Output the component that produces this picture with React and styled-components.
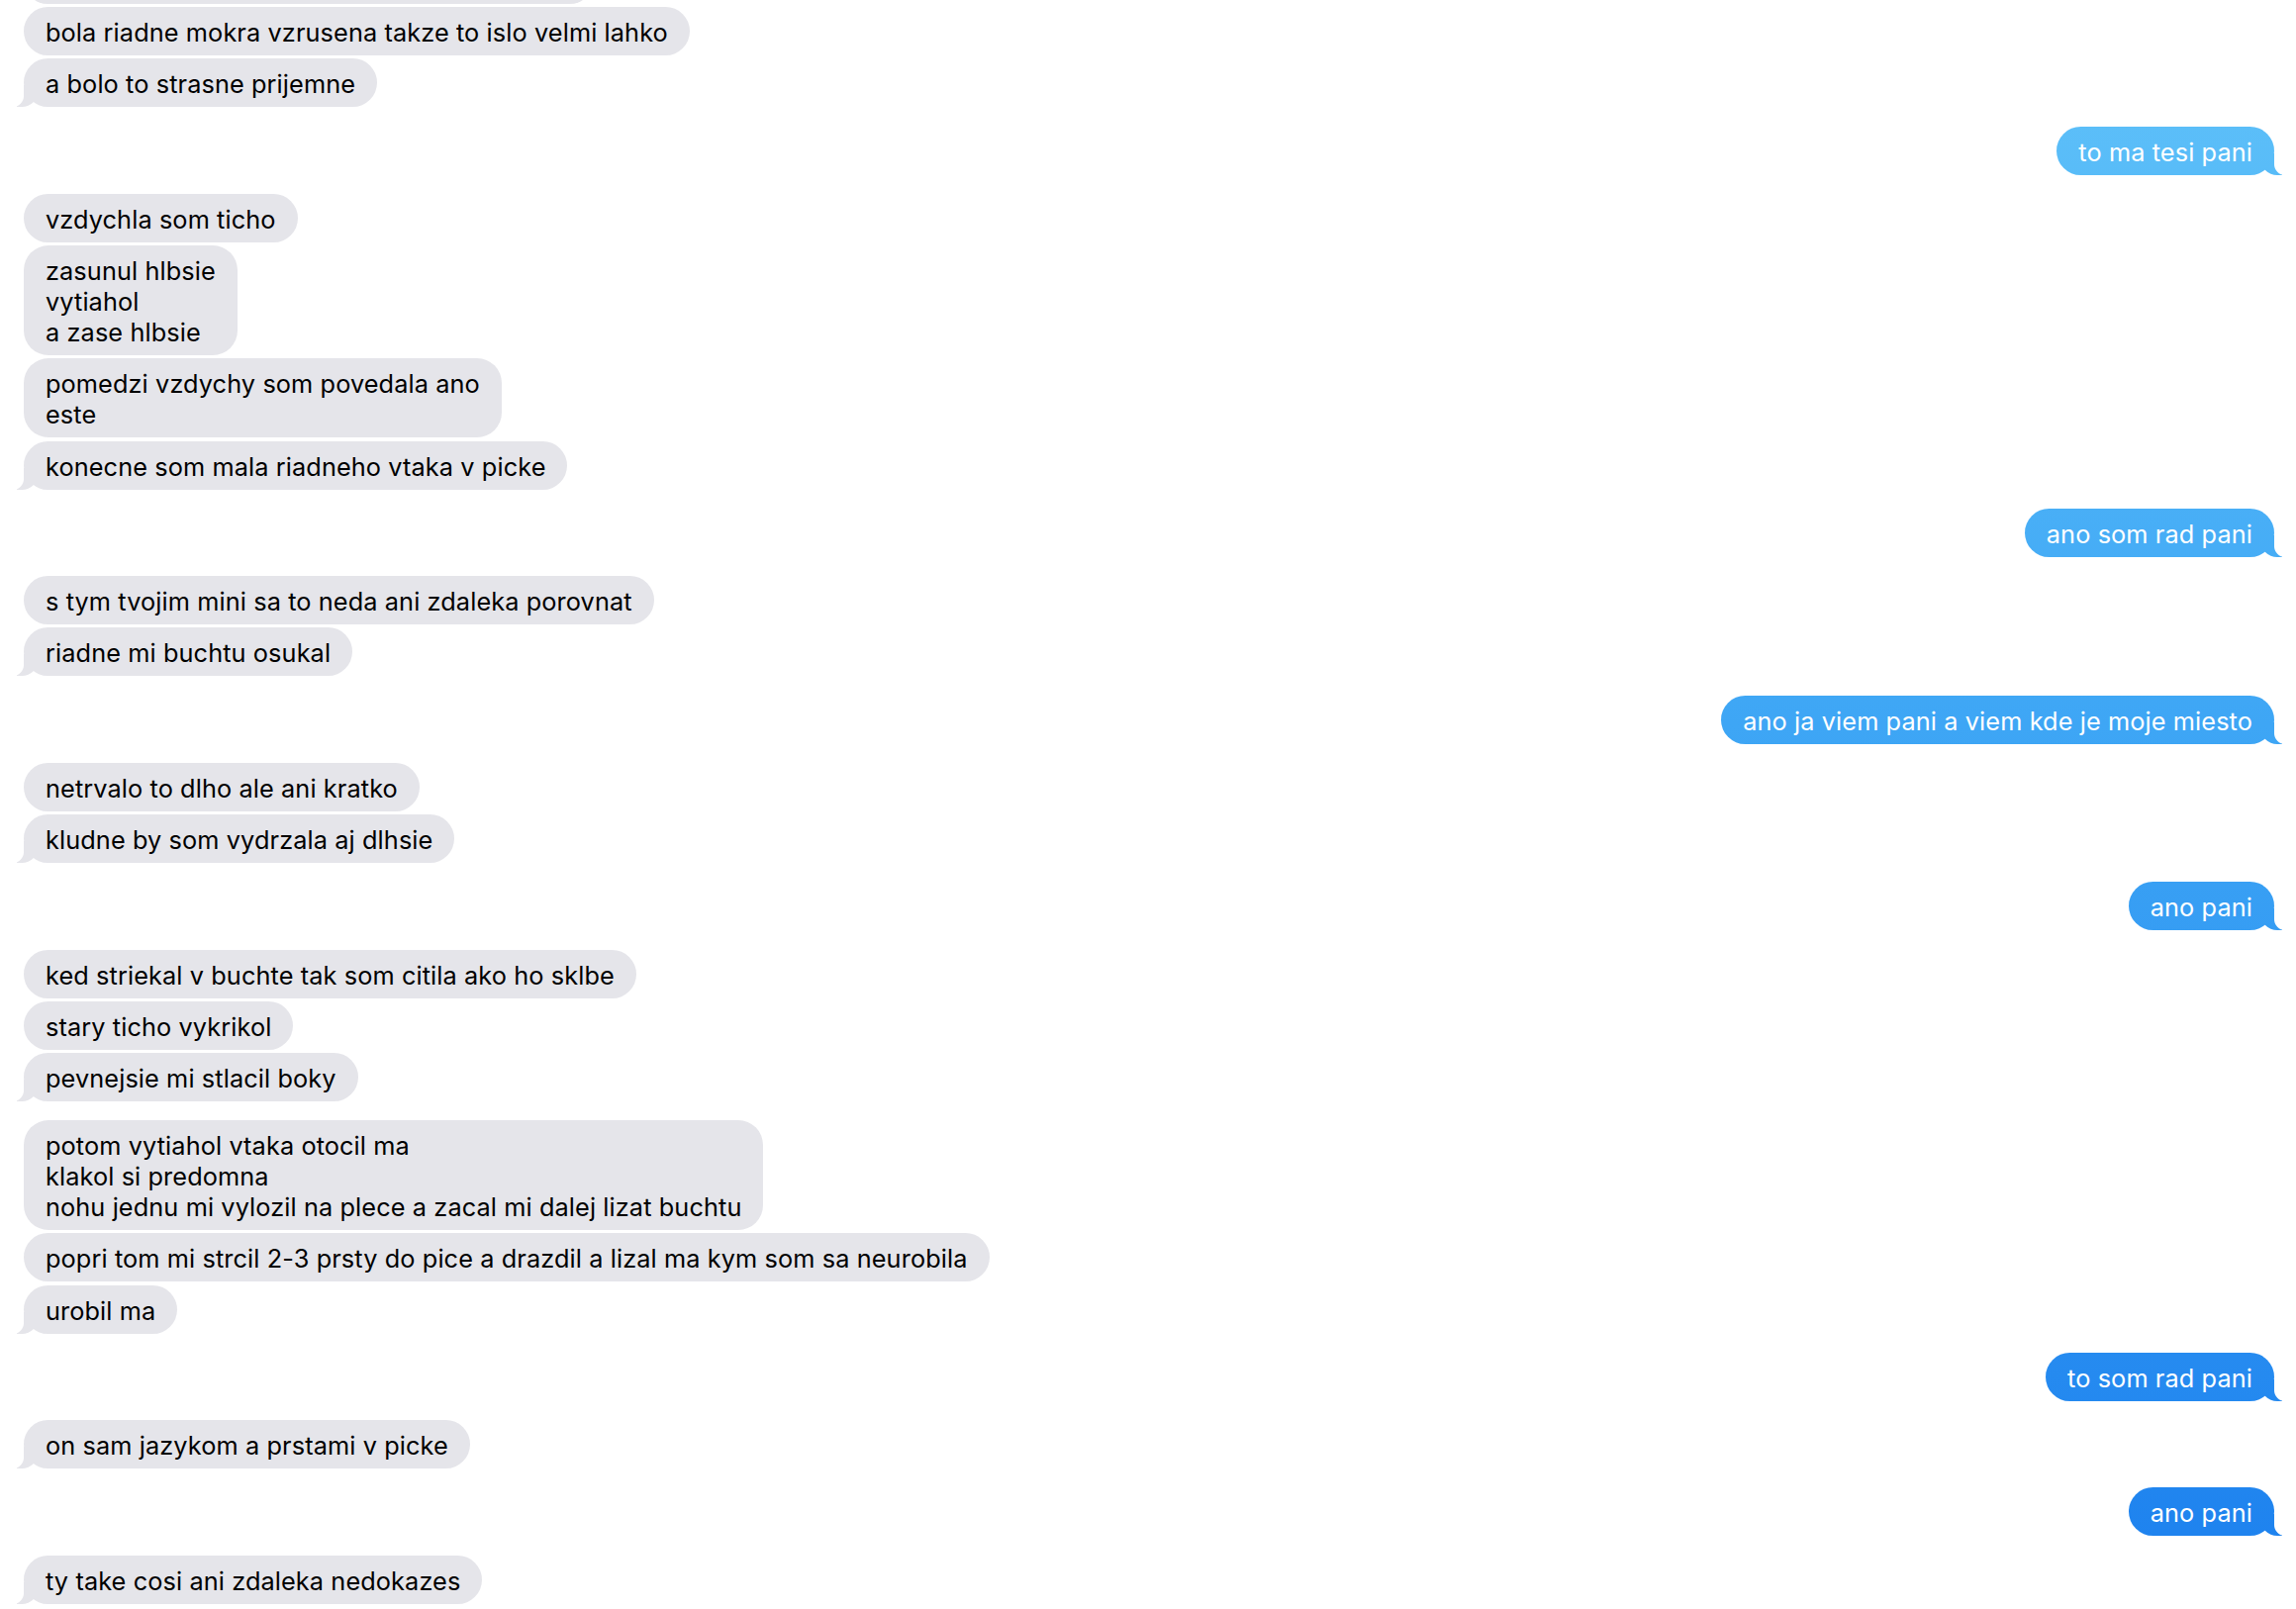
import React from "react";
import styled, { createGlobalStyle, css } from "styled-components";

const Global = createGlobalStyle`
  html, body {
    margin: 0;
    padding: 0;
    background: #ffffff;
    width: 2320px;
    height: 1626px;
    overflow: hidden;
  }
  body {
    font-family: Inter, "Noto Sans", "Liberation Sans", sans-serif;
    -webkit-font-smoothing: antialiased;
  }
`;

const SENT_GRADIENT = "linear-gradient(to bottom, #61c3f9 0%, #3ea6f5 45%, #1c80ee 100%)";

const Chat = styled.main`
  display: flex;
  flex-direction: column;
  gap: 19.25px;
  margin-top: -45px;
  padding: 0 22px 0 24px;
`;

const Group = styled.section`
  display: flex;
  flex-direction: column;
  gap: 3.22px;
  align-items: ${(p) => (p.$sent ? "flex-end" : "flex-start")};
`;

const Bubble = styled.div`
  position: relative;
  box-sizing: border-box;
  padding: 10px 22px 8px;
  border-radius: 25px;
  font-size: 25.3px;
  line-height: 31px;
  letter-spacing: 0.1px;
  white-space: pre-line;
  max-width: 1400px;
  ${(p) =>
    p.$sent
      ? css`
          color: #ffffff;
          background: ${SENT_GRADIENT};
          background-attachment: fixed;
        `
      : css`
          color: #000000;
          background: #e5e5ea;
        `}

  ${(p) =>
    p.$tail &&
    (p.$sent
      ? css`
          &::before {
            content: "";
            position: absolute;
            bottom: 0;
            right: -8px;
            width: 22px;
            height: 22px;
            background: ${SENT_GRADIENT};
            background-attachment: fixed;
            border-bottom-left-radius: 17px;
          }
          &::after {
            content: "";
            position: absolute;
            bottom: 0;
            right: -12px;
            width: 12px;
            height: 22px;
            background: #ffffff;
            border-bottom-left-radius: 11px;
          }
        `
      : css`
          &::before {
            content: "";
            position: absolute;
            bottom: 0;
            left: -7px;
            width: 22px;
            height: 22px;
            background: #e5e5ea;
            border-bottom-right-radius: 17px;
          }
          &::after {
            content: "";
            position: absolute;
            bottom: 0;
            left: -12px;
            width: 12px;
            height: 22px;
            background: #ffffff;
            border-bottom-right-radius: 11px;
          }
        `)}
`;

const Text = styled.span`
  position: relative;
  z-index: 2;
`;

const groups = [
  {
    sent: false,
    msgs: [
      { t: "\u00a0", w: 576 },
      { t: "bola riadne mokra vzrusena takze to islo velmi lahko" },
      { t: "a bolo to strasne prijemne" },
    ],
  },
  { sent: true, msgs: [{ t: "to ma tesi pani" }] },
  {
    sent: false,
    msgs: [
      { t: "vzdychla som ticho" },
      { t: "zasunul hlbsie\nvytiahol\na zase hlbsie" },
      { t: "pomedzi vzdychy som povedala ano\neste" },
      { t: "konecne som mala riadneho vtaka v picke" },
    ],
  },
  { sent: true, msgs: [{ t: "ano som rad pani" }] },
  {
    sent: false,
    msgs: [
      { t: "s tym tvojim mini sa to neda ani zdaleka porovnat" },
      { t: "riadne mi buchtu osukal" },
    ],
  },
  { sent: true, msgs: [{ t: "ano ja viem pani a viem kde je moje miesto" }] },
  {
    sent: false,
    msgs: [
      { t: "netrvalo to dlho ale ani kratko" },
      { t: "kludne by som vydrzala aj dlhsie" },
    ],
  },
  { sent: true, msgs: [{ t: "ano pani" }] },
  {
    sent: false,
    msgs: [
      { t: "ked striekal v buchte tak som citila ako ho sklbe" },
      { t: "stary ticho vykrikol" },
      { t: "pevnejsie mi stlacil boky" },
    ],
  },
  {
    sent: false,
    msgs: [
      {
        t: "potom vytiahol vtaka otocil ma\nklakol si predomna\nnohu jednu mi vylozil na plece a zacal mi dalej lizat buchtu",
      },
      { t: "popri tom mi strcil 2-3 prsty do pice a drazdil a lizal ma kym som sa neurobila" },
      { t: "urobil ma" },
    ],
  },
  { sent: true, msgs: [{ t: "to som rad pani" }] },
  { sent: false, msgs: [{ t: "on sam jazykom a prstami v picke" }] },
  { sent: true, msgs: [{ t: "ano pani" }] },
  { sent: false, msgs: [{ t: "ty take cosi ani zdaleka nedokazes" }] },
];

export default function App() {
  return (
    <>
      <Global />
      <Chat>
        {groups.map((g, gi) => (
          <Group key={gi} $sent={g.sent}>
            {g.msgs.map((m, mi) => (
              <Bubble
                key={mi}
                $sent={g.sent}
                $tail={mi === g.msgs.length - 1}
                style={m.w ? { width: m.w } : undefined}
              >
                <Text>{m.t}</Text>
              </Bubble>
            ))}
          </Group>
        ))}
      </Chat>
    </>
  );
}
